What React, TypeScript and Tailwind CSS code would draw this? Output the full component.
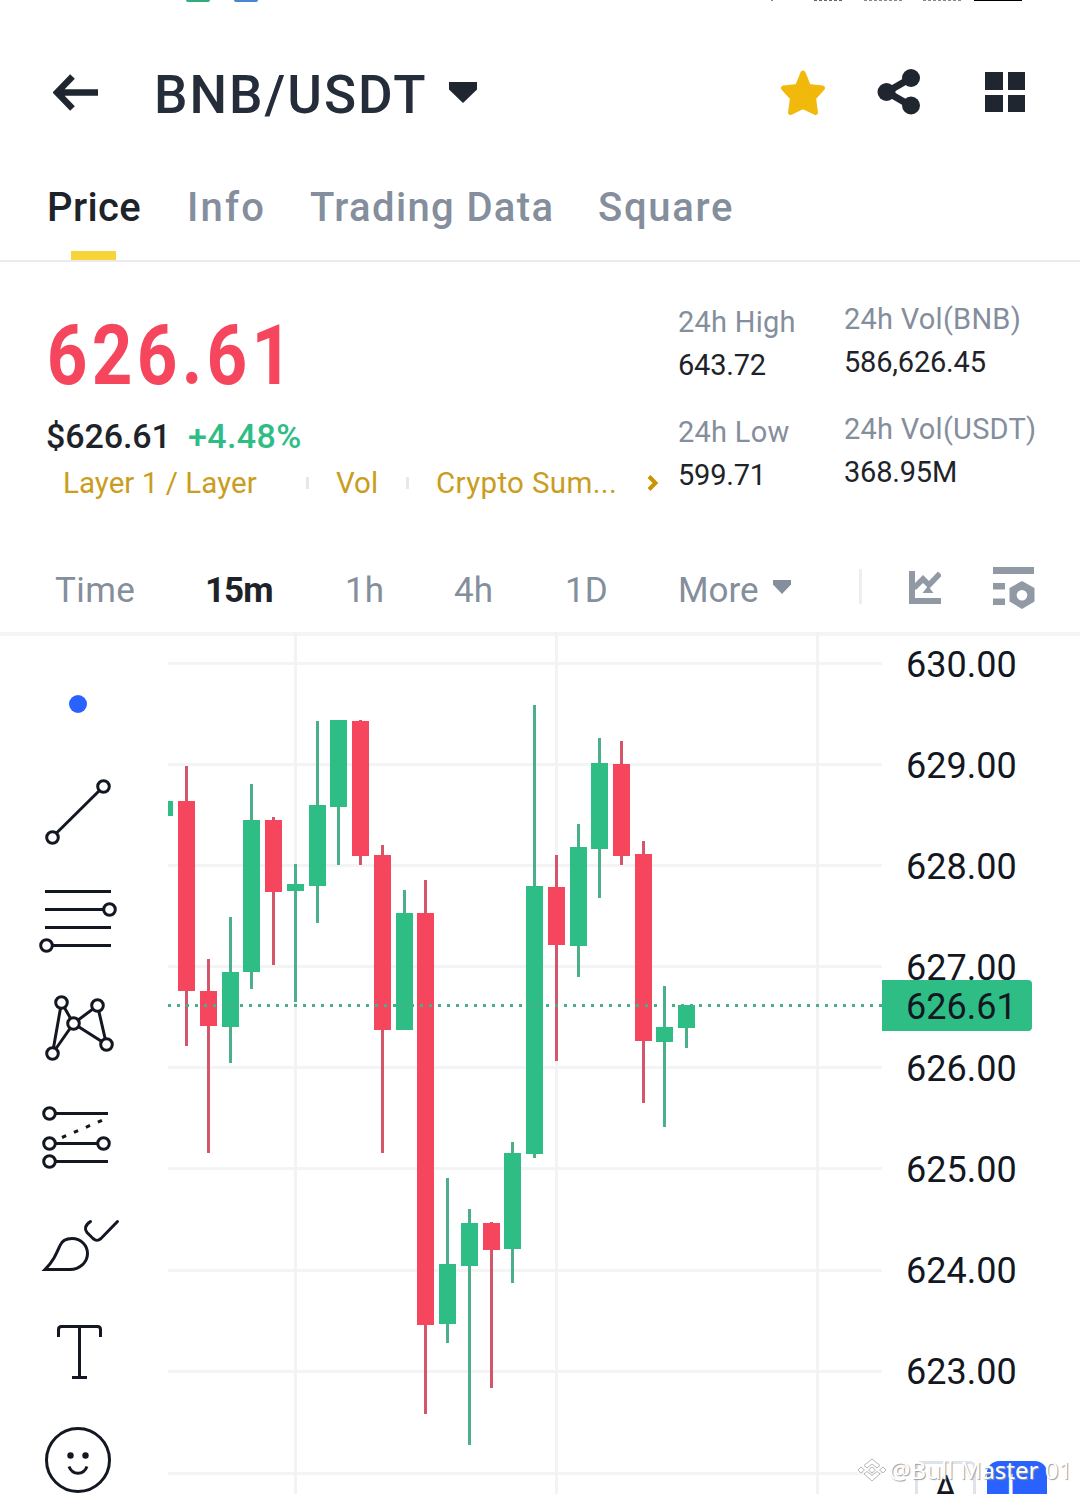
import { clsx } from 'clsx';

const tabs = [
  { label: 'Price', width: 'w-[94px]', tracking: 'tracking-[0.4px]', active: true },
  { label: 'Info', width: 'w-[77px]', tracking: 'tracking-[2.2px]' },
  { label: 'Trading Data', width: 'w-[242px]', tracking: 'tracking-[1.35px]' },
  { label: 'Square', width: 'w-[136px]', tracking: 'tracking-[1.7px]' },
];

const axisPrices = ['630.00', '629.00', '628.00', '627.00', '626.00', '625.00', '624.00', '623.00'];

// x, high, body top, body bottom, low, rising
type Candle = [number, number, number, number, number, boolean];

const candles: Candle[] = [
  [178, 766, 801, 991, 1046, false],
  [200, 959, 991, 1026, 1153, false],
  [222, 917, 972, 1027, 1063, true],
  [243, 784, 820, 972, 989, true],
  [265, 817, 820, 892, 965, false],
  [287, 864, 884, 891, 1002, true],
  [309, 721, 805, 886, 923, true],
  [330, 720, 720, 807, 865, true],
  [352, 720, 721, 856, 865, false],
  [374, 845, 855, 1030, 1153, false],
  [396, 890, 913, 1030, 1030, true],
  [417, 880, 913, 1325, 1414, false],
  [439, 1178, 1264, 1324, 1343, true],
  [461, 1209, 1223, 1266, 1445, true],
  [483, 1222, 1223, 1250, 1388, false],
  [504, 1142, 1153, 1249, 1283, true],
  [526, 705, 886, 1154, 1158, true],
  [548, 855, 887, 945, 1061, false],
  [570, 824, 847, 946, 977, true],
  [591, 738, 763, 849, 898, true],
  [613, 741, 764, 856, 865, false],
  [635, 841, 854, 1041, 1103, false],
  [656, 986, 1027, 1042, 1127, true],
  [678, 1005, 1005, 1028, 1048, true],
];

const gridRows = [662, 763, 864, 965, 1066, 1167, 1269, 1370, 1472];
const gridCols = [294, 555, 816];

const Header = () => (
  <header className="flex h-[184px] items-start">
    <svg className="ml-[53px] mt-[73px] h-[40px] w-[45px]" viewBox="0 0 45 40" fill="none" stroke="#202630" strokeWidth="6.5">
      <path d="M19.500 3.500 4 19.500l15.500 16M5 19.500h40" />
    </svg>
    <h1 className="ml-[56px] mt-[63px] w-[275px] whitespace-nowrap text-[53px] leading-[64px] font-medium tracking-[2px] text-[#252d3a]">
      BNB/USDT
    </h1>
    <svg className="ml-[20px] mt-[82px] h-[21px] w-[28px]" viewBox="0 0 28 21" fill="#202630">
      <path d="M0 0h28v7.500L14 21 0 7.500Z" />
    </svg>
    <svg className="ml-[303px] mt-[69px] h-[48px] w-[46px]" viewBox="0 0 46 48" fill="#f0b90b" stroke="#f0b90b" strokeWidth="5" strokeLinejoin="round">
      <path d="M23 4 28.500 17.500 42.500 19 33.500 29 35.500 43.500 23 37.500 10.500 43.500 12.500 29 3.500 19 17.500 17.500Z" />
    </svg>
    <svg className="ml-[51px] mt-[69px] h-[46px] w-[44px]" viewBox="0 0 44 46" fill="#202630">
      <path d="M34 9 10 23l24 14" fill="none" stroke="#202630" strokeWidth="7" />
      <circle cx="34" cy="9" r="9" />
      <circle cx="9.500" cy="23" r="9" />
      <circle cx="34" cy="36.500" r="9" />
    </svg>
    <div className="mt-[72px] ml-[64px] grid w-[40px] grid-cols-2 gap-x-[5px] gap-y-[5px]">
      {[0, 1, 2, 3].map((i) => (
        <span key={i} className="h-[17.5px] bg-[#202630]" />
      ))}
    </div>
  </header>
);

const Tabs = () => (
  <nav className="flex h-[78px] gap-[46px] border-b-2 border-[#eaebed] pl-[46px]">
    {tabs.map((tab) => (
      <div key={tab.label} className={clsx('flex flex-col items-center justify-between', tab.width)}>
        <span
          className={clsx(
            'w-full whitespace-nowrap pl-px text-[40px] leading-[48px] font-medium',
            tab.tracking,
            tab.active ? 'text-[#1e2329]' : 'text-[#848e9c]',
          )}
        >
          {tab.label}
        </span>
        {tab.active && <span className="h-[9px] w-[45px] bg-[#f8d33a]" />}
      </div>
    ))}
  </nav>
);

const Stat = ({ label, value }: { label: string; value: string }) => (
  <div className="h-[110px] whitespace-nowrap text-[29px]">
    <div className="h-[43px] leading-[34px] tracking-[0.25px] text-[#848e9c]">{label}</div>
    <div className="leading-[34px] tracking-[-0.2px] text-[#1e2329]">{value}</div>
  </div>
);

const Summary = () => (
  <section className="flex h-[292px] whitespace-nowrap">
    <div className="w-[678px] pl-[46px] pt-[43px]">
      <div className="h-[98px] origin-left scale-x-[0.85] pl-[1px] text-[83.5px] leading-[102px] font-bold tracking-[5px] text-[#f6465d]">
        626.61
      </div>
      <div className="flex h-[44px] pt-[12px] text-[34px] leading-[42px] font-medium">
        <span className="w-[142px] tracking-[-0.1px] text-[#1e2329]">$626.61</span>
        <span className="tracking-[0.4px] text-[#2ebd85]">+4.48%</span>
      </div>
      <div className="flex items-center pt-[16px] pl-[17px] text-[29.5px] leading-[40px] text-[#c99d1e]">
        <span className="w-[243px] tracking-[0.05px]">Layer 1 / Layer</span>
        <span className="h-[12px] w-[3px] bg-[#e6e8ea]" />
        <span className="ml-[27px] w-[70px]">Vol</span>
        <span className="h-[12px] w-[3px] bg-[#e6e8ea]" />
        <span className="ml-[27px] w-[211px] tracking-[0.35px]">Crypto Sum...</span>
        <svg className="h-[16px] w-[12px]" viewBox="0 0 12 16" fill="none" stroke="#c99400" strokeWidth="4">
          <path d="m2 1.500 6.500 6.500L2 14.500" />
        </svg>
      </div>
    </div>
    <div className="w-[166px] pt-[43px]">
      <Stat label="24h High" value="643.72" />
      <Stat label="24h Low" value="599.71" />
    </div>
    <div className="pt-[39.5px]">
      <Stat label="24h Vol(BNB)" value="586,626.45" />
      <Stat label="24h Vol(USDT)" value="368.95M" />
    </div>
  </section>
);

const Intervals = () => (
  <div className="flex h-[82px] items-start border-b-[4px] border-[#f5f5f6] pl-[55px] text-[35px] leading-[73px] whitespace-nowrap text-[#848e9c]">
    <span className="w-[150px] tracking-[0.4px]">Time</span>
    <span className="w-[140px] font-bold tracking-[-1px] text-[#1e2329]">15m</span>
    <span className="w-[109px]">1h</span>
    <span className="w-[111px]">4h</span>
    <span className="w-[113px]">1D</span>
    <span className="w-[95px]">More</span>
    <svg className="mt-[26px] h-[14px] w-[18px]" viewBox="0 0 18 14" fill="#848e9c">
      <path d="M0 0h18v4.500L9 14 0 4.500Z" />
    </svg>
    <span className="mt-[15px] ml-[68px] h-[35px] w-[3px] bg-[#eceef0]" />
    <svg className="mt-[17px] ml-[47px] h-[33px] w-[32px]" viewBox="0 0 32 33" fill="none" stroke="#9199a5">
      <path d="M3 0v30h29" strokeWidth="6" />
      <path d="m5 17 9-9 6 6L31 2.500" strokeWidth="5.500" />
      <path d="m19 15 5.500 7h-11Z" fill="#9199a5" stroke="none" />
    </svg>
    <svg className="mt-[12px] ml-[52px] h-[43px] w-[42px]" viewBox="0 0 42 43" fill="#9199a5">
      <path d="M0 1h41v7H0zM0 17h12v6.500H0zM0 32.500h12v6.500H0z" />
      <path fillRule="evenodd" d="m29 15 12.500 7v13.500L29 43 16.500 35.500V22Zm0 9a5.300 5.300 0 1 0 0 10.600 5.300 5.300 0 0 0 0-10.600Z" />
    </svg>
  </div>
);

const Knob = ({ cx, cy }: { cx: number; cy: number }) => <circle cx={cx} cy={cy} r="5.800" fill="#fff" />;

const DrawingTools = () => (
  <svg className="h-[858px] w-[168px] shrink-0" viewBox="0 636 168 858" fill="none" stroke="#131722" strokeWidth="3">
    <circle cx="78" cy="704" r="9" fill="#2962ff" stroke="none" />
    {/* trend line */}
    <path d="M52 837.500 103.500 786.500" />
    <Knob cx={52.5} cy={837.5} />
    <Knob cx={103.5} cy={786.5} />
    {/* fib retracement */}
    <path d="M45 891.500h66M45 909.500h66M45 927.500h66M45 945.500h66" />
    <Knob cx={109.5} cy={909.5} />
    <Knob cx={46.5} cy={945.5} />
    {/* pattern */}
    <path d="m52.500 1053.500 9-51 12 21-21 30M73.500 1023.500l24-18 9 39-33-21" />
    <Knob cx={61.5} cy={1002.5} />
    <Knob cx={97.5} cy={1005.5} />
    <Knob cx={73.5} cy={1023.5} />
    <Knob cx={52.5} cy={1053.5} />
    <Knob cx={106.5} cy={1044.5} />
    {/* projection */}
    <path d="M49.500 1113.500H108M49.500 1143.500h54M49.500 1161.500H108" />
    <path d="m62 1137.500 42-18" strokeDasharray="4.500 8.500" />
    <Knob cx={49.5} cy={1113.5} />
    <Knob cx={49.5} cy={1143.5} />
    <Knob cx={103.5} cy={1143.5} />
    <Knob cx={49.5} cy={1161.5} />
    {/* brush */}
    <path d="M45 1269.500c8-8 11-15 15-24 2-5 7-7 12-7 9 0 15.500 7 15.500 15 0 9-8 16-17.500 16Z" />
    <path d="M90.500 1221.500c-6 4-6 8-3.500 11l6 6c3 2.500 5 2.500 8 0l16.500-17" strokeLinecap="round" />
    {/* text */}
    <path d="M58.500 1337v-7.500q0-3 3-3h36q3 0 3 3v7.500M79.500 1326.500v51M72 1377.500h15" />
    {/* emoji */}
    <circle cx="78" cy="1460" r="31.500" />
    <path d="M69 1466.500c3.500 9 14.500 9 18 0" />
    <circle cx="70.500" cy="1455.500" r="3.200" fill="#131722" stroke="none" />
    <circle cx="85.500" cy="1455.500" r="3.200" fill="#131722" stroke="none" />
  </svg>
);

const CandleChart = () => (
  <svg className="-mt-[4px] h-[862px] w-[714px] shrink-0" viewBox="168 632 714 862" shapeRendering="crispEdges">
    {gridRows.map((y) => (
      <rect key={y} x="168" y={y} width="714" height="3" fill="#f3f4f5" />
    ))}
    {gridCols.map((x) => (
      <rect key={x} x={x} y="632" width="3" height="862" fill="#f2f3f4" />
    ))}
    <rect x="168" y="801" width="5" height="15" fill="#2ebd85" />
    {candles.map(([x, high, top, bottom, low, up]) => (
      <g key={x}>
        <rect x={x + 7} y={high} width="3" height={low - high} fill={up ? '#4bb08a' : '#d3566a'} />
        <rect x={x} y={top} width="17" height={bottom - top} fill={up ? '#2ebd85' : '#f6465d'} />
      </g>
    ))}
    <path d="M168 1005.500h714" stroke="#4aae88" strokeWidth="3" strokeDasharray="3 6" />
  </svg>
);

const PriceAxis = () => (
  <div className="relative w-[198px] text-[36px] text-[#131722]">
    <div className="-mt-[1.5px] flex flex-col pl-[24px]">
      {axisPrices.map((price) => (
        <span key={price} className="h-[101.1px] leading-[60px]">{price}</span>
      ))}
    </div>
    <div className="absolute top-[344px] left-0 h-[51px] w-[150px] rounded-r-[4px] bg-[#2ebd85] pl-[24px] leading-[55px]">
      626.61
    </div>
    <div className="absolute top-[825px] left-[33px] h-[60px] w-[61px] rounded-t-[6px] border-[3px] border-[#e0e3eb] text-center leading-[50px]">
      A
    </div>
    <div className="absolute top-[825px] left-[105px] h-[60px] w-[60px] rounded-t-[12px] bg-[#2962ff] pl-[19px] leading-[54px] text-white">
      L
    </div>
    {/* watermark */}
    <div className="absolute top-[817px] -left-[24px] flex items-center whitespace-nowrap">
      <svg className="h-[24px] w-[28px]" viewBox="0 0 28 24" fill="#fff" stroke="#b4b6bb" strokeWidth="1">
        <path d="m14 1 8 6.500-3 2.500-5-4-5 4-3-2.500ZM14 9l3.500 3-3.500 3-3.500-3ZM3 9l3.500 3L3 15l-3-3ZM25 9l3 3-3 3-3.500-3ZM6 16l3-2.500 5 4 5-4 3 2.500-8 7Z" />
      </svg>
      <span className="ml-[3px] font-['Noto_Sans'] text-[24px] leading-[34px] text-white [text-shadow:1px_1px_1px_#9a9ca0]">
        @Bull Master 01
      </span>
    </div>
  </div>
);

export default function App() {
  return (
    <main className="relative h-[1494px] w-[1080px] overflow-hidden bg-white font-[Roboto,sans-serif]">
      {/* bottom edge of the system status bar */}
      <div className="absolute top-0 left-[186px] h-[2px] w-[24px] rounded-b bg-[#2fae7c]" />
      <div className="absolute top-0 left-[234px] h-[2px] w-[24px] rounded-b bg-[#4a86d0]" />
      <div className="absolute top-0 left-[771px] h-px w-[2px] bg-[#888]" />
      <div className="absolute top-0 left-[814px] h-px w-[28px] border-t border-dashed border-[#666]" />
      <div className="absolute top-0 left-[864px] h-px w-[38px] border-t border-dashed border-[#888]" />
      <div className="absolute top-0 left-[923px] h-px w-[38px] border-t border-dashed border-[#888]" />
      <div className="absolute top-0 left-[974px] h-[1px] w-[48px] bg-black" />
      <Header />
      <Tabs />
      <Summary />
      <Intervals />
      <div className="flex h-[858px]">
        <DrawingTools />
        <CandleChart />
        <PriceAxis />
      </div>
    </main>
  );
}
